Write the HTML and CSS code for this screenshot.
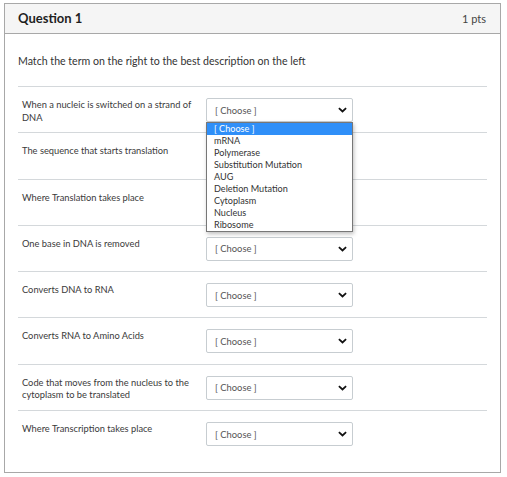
FILE: index.html
```html
<!DOCTYPE html>
<html>
<head>
<meta charset="utf-8">
<link rel="stylesheet" href="styles.css">
</head>
<body>
<div class="question">
  <div class="q-header">
    <span class="q-title">Question 1</span>
    <span class="q-pts">1 pts</span>
  </div>
  <div class="q-body">
    <p class="q-text">Match the term on the right to the best description on the left</p>
    <div class="rows">
      <div class="row">
        <div class="label">When a nucleic is switched on a strand of DNA</div>
        <div class="select-wrap">
          <div class="select"><span>[ Choose ]</span><svg class="chev" viewBox="0 0 10 6"><path d="M1 1 L5 4.6 L9 1" fill="none" stroke="#111" stroke-width="2"/></svg></div>
          <ul class="dropdown">
            <li class="selected">[ Choose ]</li>
            <li>mRNA</li>
            <li>Polymerase</li>
            <li>Substitution Mutation</li>
            <li>AUG</li>
            <li>Deletion Mutation</li>
            <li>Cytoplasm</li>
            <li>Nucleus</li>
            <li>Ribosome</li>
          </ul>
        </div>
      </div>
      <div class="row">
        <div class="label">The sequence that starts translation</div>
        <div class="select-wrap"><div class="select"><span>[ Choose ]</span><svg class="chev" viewBox="0 0 10 6"><path d="M1 1 L5 4.6 L9 1" fill="none" stroke="#111" stroke-width="2"/></svg></div></div>
      </div>
      <div class="row">
        <div class="label">Where Translation takes place</div>
        <div class="select-wrap"><div class="select"><span>[ Choose ]</span><svg class="chev" viewBox="0 0 10 6"><path d="M1 1 L5 4.6 L9 1" fill="none" stroke="#111" stroke-width="2"/></svg></div></div>
      </div>
      <div class="row">
        <div class="label">One base in DNA is removed</div>
        <div class="select-wrap"><div class="select"><span>[ Choose ]</span><svg class="chev" viewBox="0 0 10 6"><path d="M1 1 L5 4.6 L9 1" fill="none" stroke="#111" stroke-width="2"/></svg></div></div>
      </div>
      <div class="row">
        <div class="label">Converts DNA to RNA</div>
        <div class="select-wrap"><div class="select"><span>[ Choose ]</span><svg class="chev" viewBox="0 0 10 6"><path d="M1 1 L5 4.6 L9 1" fill="none" stroke="#111" stroke-width="2"/></svg></div></div>
      </div>
      <div class="row">
        <div class="label">Converts RNA to Amino Acids</div>
        <div class="select-wrap"><div class="select"><span>[ Choose ]</span><svg class="chev" viewBox="0 0 10 6"><path d="M1 1 L5 4.6 L9 1" fill="none" stroke="#111" stroke-width="2"/></svg></div></div>
      </div>
      <div class="row">
        <div class="label">Code that moves from the nucleus to the cytoplasm to be translated</div>
        <div class="select-wrap"><div class="select"><span>[ Choose ]</span><svg class="chev" viewBox="0 0 10 6"><path d="M1 1 L5 4.6 L9 1" fill="none" stroke="#111" stroke-width="2"/></svg></div></div>
      </div>
      <div class="row">
        <div class="label">Where Transcription takes place</div>
        <div class="select-wrap"><div class="select"><span>[ Choose ]</span><svg class="chev" viewBox="0 0 10 6"><path d="M1 1 L5 4.6 L9 1" fill="none" stroke="#111" stroke-width="2"/></svg></div></div>
      </div>
    </div>
  </div>
</div>
</body>
</html>
```

FILE: styles.css
```css
html, body {
  margin: 0;
  background: #fff;
}
body {
  padding: 3px 0 0 4px;
  font-family: Lato, "Open Sans", sans-serif;
  color: #2d3b45;
}
.question {
  width: 497px;
  box-sizing: border-box;
  border: 1px solid #a8a8a8;
}
.q-header {
  background: #f5f5f5;
  border-bottom: 1px solid #a8a8a8;
  display: flex;
  align-items: center;
  justify-content: space-between;
  padding: 0 14px 1px 13px;
  height: 28px;
}
.q-title {
  font-weight: bold;
  font-size: 13px;
  color: #1f1f1f;
}
.q-pts {
  font-size: 11px;
  color: #444;
}
.q-body {
  padding: 20px 13px 16px 13px;
}
.q-text {
  margin: 0 0 18px 0;
  font-size: 10.6px;
  line-height: 14px;
  color: #333;
}
.row {
  height: 46.3px;
  box-sizing: border-box;
  border-top: 1px solid #d4d8db;
  padding: 11px 0 0 4px;
  display: grid;
  grid-template-columns: 184px 147px;
  align-items: start;
}
.label {
  font-size: 9.3px;
  line-height: 12.6px;
  padding: 1px 10px 0 0;
  color: #3a3a3a;
}
.select-wrap {
  position: relative;
}
.select {
  height: 24px;
  box-sizing: border-box;
  border: 1px solid #c7cdd1;
  border-radius: 2px;
  display: flex;
  align-items: center;
  justify-content: space-between;
  padding: 0 5px 0 8px;
  font-size: 9.4px;
  color: #555;
}
.chev {
  width: 9px;
  height: 6px;
}
.dropdown {
  position: absolute;
  left: 0;
  top: 24px;
  width: 147px;
  box-sizing: border-box;
  margin: 0;
  padding: 0;
  list-style: none;
  background: #fff;
  border: 1px solid #777;
  box-shadow: 1px 2px 4px rgba(0,0,0,0.25);
  z-index: 5;
}
.dropdown li {
  height: 12px;
  line-height: 12px;
  padding-left: 7px;
  font-size: 9.1px;
  color: #333;
}
.dropdown li.selected {
  background: #2f8ff8;
  color: #fff;
}
```
